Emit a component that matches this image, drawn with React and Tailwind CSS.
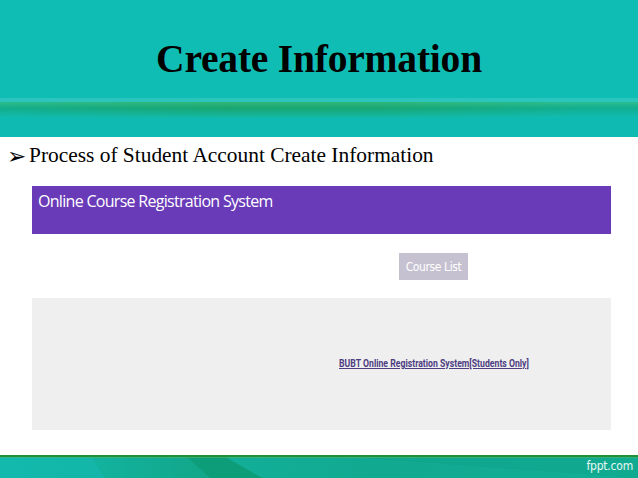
import React from "react";

export default function App() {
  return (
    <div className="w-[638px] h-[478px] bg-white flex flex-col overflow-hidden">
      {/* Header */}
      <div className="h-[137px] bg-[#10bdb4] flex flex-col">
        <div className="h-[98px] flex items-center justify-center pt-[22px]">
          <h1 className="text-[39.5px] leading-none font-bold text-black tracking-[-0.2px]" style={{ fontFamily: '"Liberation Serif", "Times New Roman", serif' }}>
            Create Information
          </h1>
        </div>
        <div className="h-[4px] bg-[linear-gradient(90deg,#2cc4bc_0%,#2ac6bd_100%)]" />
        <div className="h-[16px] bg-[linear-gradient(90deg,rgba(32,170,110,0.15)_0%,rgba(32,170,110,0.9)_35%,rgba(32,170,110,0.8)_60%,rgba(32,170,110,0)_92%)]">
          <div className="h-full bg-[linear-gradient(180deg,rgba(60,190,120,0.6)_0%,rgba(20,160,110,0.5)_40%,rgba(16,189,180,0.8)_100%)]" />
        </div>
        <div className="flex-1 bg-[#0fbab2]" />
      </div>

      {/* Bullet line */}
      <div className="flex items-center h-[36px] pl-[7px] pt-[2px]" style={{ fontFamily: '"Liberation Serif", "Times New Roman", serif' }}>
        <span className="text-[23px] leading-none text-black mr-[3px]">➢</span>
        <span className="text-[21.4px] leading-none text-black">Process of Student Account Create Information</span>
      </div>

      {/* Screenshot content */}
      <div className="pl-[32px] pr-[27px] pt-[13px] flex flex-col">
        <div className="h-[48px] bg-[#693bb8] flex items-start pt-[7px] pl-[6px]">
          <span className="text-[16px] leading-none text-white tracking-[-0.7px]" style={{ fontFamily: '"Open Sans", "Noto Sans", sans-serif' }}>
            Online Course Registration System
          </span>
        </div>
        <div className="h-[64px] flex items-start pt-[19px] pl-[367px]">
          <div className="w-[69px] h-[27px] bg-[#c6c1d0] flex items-center justify-center">
            <span className="text-[12px] text-white tracking-[-0.4px]" style={{ fontFamily: '"DejaVu Sans Condensed", "Roboto", sans-serif' }}>
              Course List
            </span>
          </div>
        </div>
        <div className="h-[132px] bg-[#efefef] flex items-start pt-[58px] pl-[307px]">
          <span className="inline-block origin-left scale-x-[0.79] whitespace-nowrap text-[11px] font-bold text-[#4e3d82] underline" style={{ fontFamily: 'Roboto, "Liberation Sans", sans-serif' }}>
            BUBT Online Registration System[Students Only]
          </span>
        </div>
      </div>

      <div className="flex-1" />

      {/* Footer band */}
      <div className="relative h-[23px] bg-[#11a88a]">
        <svg className="absolute inset-0" width="638" height="23" viewBox="0 0 638 23" preserveAspectRatio="none">
          <defs>
            <linearGradient id="fg" x1="0" x2="1" y1="0" y2="0">
              <stop offset="0" stopColor="#12bdb0" />
              <stop offset="0.3" stopColor="#12a88c" />
              <stop offset="0.6" stopColor="#0f9b78" />
              <stop offset="1" stopColor="#12a486" />
            </linearGradient>
          </defs>
          <rect x="0" y="0" width="638" height="23" fill="url(#fg)" />
          <polygon points="0,0 90,0 105,23 0,23" fill="#14b8ad" opacity="0.7" />
          <polygon points="185,0 222,0 262,23 210,23" fill="#0b9a72" opacity="0.7" />
          <polygon points="222,0 330,0 638,23 262,23" fill="#13b7a8" opacity="0.5" />
          <polygon points="330,0 638,0 638,23" fill="#10ad95" opacity="0.7" />
          <rect x="0" y="0" width="638" height="2" fill="#1f8f3a" />
          <rect x="0" y="2" width="638" height="1" fill="#49b868" opacity="0.6" />
        </svg>
        <span className="absolute right-[5px] top-[5px] text-[12px] leading-none text-white/90 tracking-[-0.2px]" style={{ fontFamily: '"DejaVu Sans Condensed", "Roboto", sans-serif' }}>
          fppt.com
        </span>
      </div>
    </div>
  );
}
